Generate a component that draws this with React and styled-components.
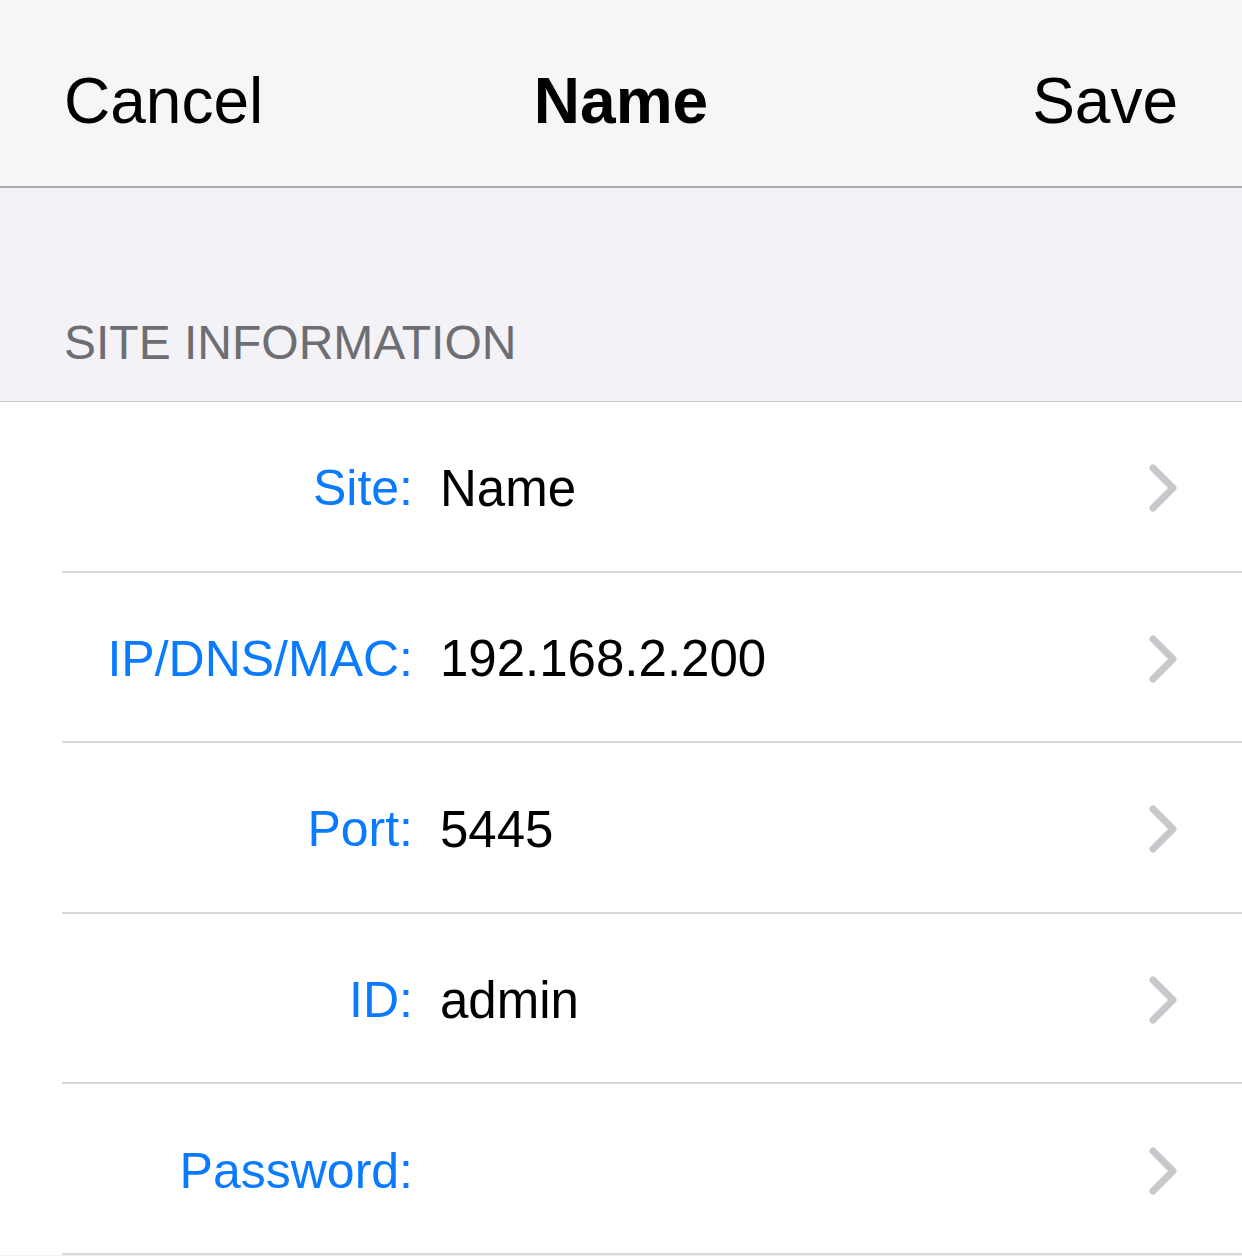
import styled, { createGlobalStyle } from "styled-components"

const Global = createGlobalStyle`
  html, body {
    margin: 0;
    padding: 0;
    background: #f2f2f7;
    font-family: "Liberation Sans", Arial, sans-serif;
  }
`

const rows = [
    { label: "Site:", value: "Name" },
    { label: "IP/DNS/MAC:", value: "192.168.2.200" },
    { label: "Port:", value: "5445" },
    { label: "ID:", value: "admin" },
    { label: "Password:", value: "" },
]

const Chevron = () => (
    <svg width="34" height="52" viewBox="0 0 34 52">
        <polyline points="7,6 27,26 7,46" fill="none" stroke="#c7c7cc" strokeWidth="7" strokeLinecap="round" strokeLinejoin="round" />
    </svg>
)

const App = () => {
    return (
        <Screen>
            <Global />
            <NavBar>
                <NavButton>Cancel</NavButton>
                <NavTitle>Name</NavTitle>
                <NavButton $right>Save</NavButton>
            </NavBar>
            <SectionHeader>SITE INFORMATION</SectionHeader>
            <List>
                {rows.map((r) => (
                    <Row key={r.label}>
                        <Label>{r.label}</Label>
                        <Value>{r.value}</Value>
                        <Chevron />
                    </Row>
                ))}
            </List>
        </Screen>
    )
}

const Screen = styled.div`
    width: 1242px;
    min-height: 1256px;
    background: #f2f2f7;
`

const NavBar = styled.div`
    height: 188px;
    box-sizing: border-box;
    background: #f6f6f8;
    border-bottom: 2px solid #a9a9ac;
    display: grid;
    grid-template-columns: 1fr auto 1fr;
    align-items: center;
    padding: 16px 64px 0;
`

const NavButton = styled.div`
    font-size: 64px;
    color: #000;
    justify-self: ${(p) => (p.$right ? "end" : "start")};
`

const NavTitle = styled.div`
    font-size: 64px;
    font-weight: 700;
    color: #000;
`

const SectionHeader = styled.div`
    height: 214px;
    box-sizing: border-box;
    padding: 127px 0 0 64px;
    font-size: 48px;
    color: #6d6d72;
    line-height: 56px;
    border-bottom: 1px solid #c8c7cc;
`

const List = styled.div`
    background: #fff;
    padding-left: 62px;
`

const Row = styled.div`
    height: 170.6px;
    box-sizing: border-box;
    border-bottom: 2px solid #d8d8dc;
    display: grid;
    grid-template-columns: 351px 1fr auto;
    column-gap: 27px;
    align-items: center;
    padding-right: 62px;
    padding-top: 4px;
`

const Label = styled.div`
    text-align: right;
    font-size: 50px;
    color: #0a7aff;
`

const Value = styled.div`
    font-size: 51px;
    color: #000;
`

export default App
